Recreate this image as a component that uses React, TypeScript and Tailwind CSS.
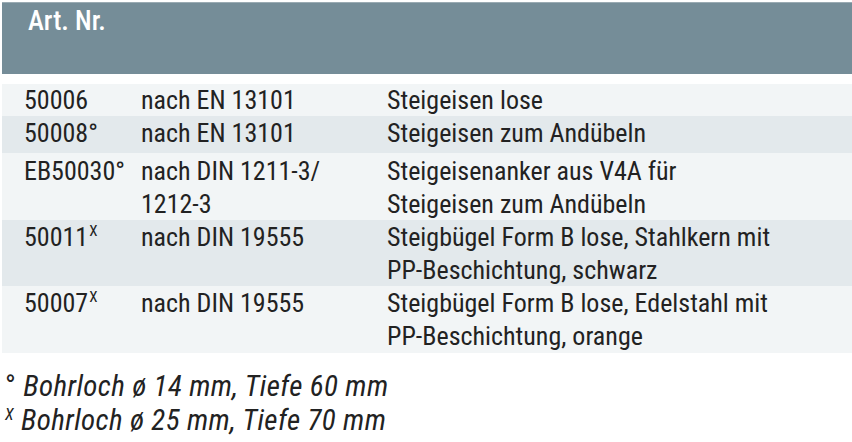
type Row = {
  art: string;
  mark?: "deg" | "x";
  norm: string[];
  desc: string[];
  cls: string;
};

const rows: Row[] = [
  { art: "50006", norm: ["nach EN 13101"], desc: ["Steigeisen lose"], cls: "h-[32px] bg-[#f2f5f6]" },
  { art: "50008", mark: "deg", norm: ["nach EN 13101"], desc: ["Steigeisen zum Andübeln"], cls: "h-[37px] pt-[1px] bg-[#e3e9ec]" },
  {
    art: "EB50030",
    mark: "deg",
    norm: ["nach DIN 1211-3/", "1212-3"],
    desc: ["Steigeisenanker aus V4A für", "Steigeisen zum Andübeln"],
    cls: "h-[67px] pt-[2px] bg-[#f2f5f6]",
  },
  {
    art: "50011",
    mark: "x",
    norm: ["nach DIN 19555"],
    desc: ["Steigbügel Form B lose, Stahlkern mit", "PP-Beschichtung, schwarz"],
    cls: "h-[66px] pt-[1px] bg-[#e3e9ec]",
  },
  {
    art: "50007",
    mark: "x",
    norm: ["nach DIN 19555"],
    desc: ["Steigbügel Form B lose, Edelstahl mit", "PP-Beschichtung, orange"],
    cls: "h-[67px] pt-[1px] bg-[#f2f5f6]",
  },
];

function Mark({ m }: { m?: "deg" | "x" }) {
  if (m === "deg") return <span className="tracking-[-2px]">°</span>;
  if (m === "x") return <span className="relative -top-[10px] ml-[1px] text-[15px] leading-none">X</span>;
  return null;
}

export default function App() {
  return (
    <div className="w-[852px] h-[442px] bg-white overflow-hidden font-['Roboto_Condensed',sans-serif] font-normal text-[#222222] text-[26px] leading-[33px]">
      <div className="ml-[2px] mt-[2px] h-[72px] bg-[#758d98] border-t border-[#9aabb3] pl-[26px] pt-[2px]">
        <span className="text-white text-[27px] font-medium">Art. Nr.</span>
      </div>
      <div className="ml-[2px] mt-[10px] flex flex-col">
        {rows.map((r) => (
          <div key={r.art} className={"flex " + r.cls}>
            <div className="w-[139px] pl-[22px] shrink-0 whitespace-nowrap">
              {r.art}
              <Mark m={r.mark} />
            </div>
            <div className="w-[246px] shrink-0">
              {r.norm.map((l) => (
                <div key={l}>{l}</div>
              ))}
            </div>
            <div className="flex-1">
              {r.desc.map((l) => (
                <div key={l}>{l}</div>
              ))}
            </div>
          </div>
        ))}
      </div>
      <div className="mt-[16px] pl-[5px] italic text-[29px] tracking-[0.4px] leading-[34px]">
        <div>
          <span className="not-italic">°</span> Bohrloch ø 14 mm, Tiefe 60 mm
        </div>
        <div>
          <span className="relative -top-[10px] text-[16px] leading-none">X</span> Bohrloch ø 25 mm, Tiefe 70 mm
        </div>
      </div>
    </div>
  );
}
